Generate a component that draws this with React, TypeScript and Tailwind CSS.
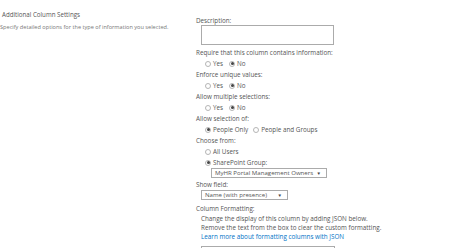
import React from 'react';

function Radio({ checked, label }: { checked?: boolean; label: string }) {
  return (
    <span className="flex items-center gap-[2px]">
      <span className="flex h-[6px] w-[6px] items-center justify-center rounded-full border border-[#b5b5b5] bg-white">
        {checked && <span className="h-[3px] w-[3px] rounded-full bg-[#444]" />}
      </span>
      <span>{label}</span>
    </span>
  );
}

function Select({ value, className }: { value: string; className: string }) {
  return (
    <div className={`flex h-[10px] items-center justify-between whitespace-nowrap border border-[#ababab] bg-white pl-[3px] pr-[5px] ${className}`}>
      <span className="text-[6.1px] leading-none">{value}</span>
      <span className="text-[4.5px] leading-none text-[#444]">▼</span>
    </div>
  );
}

export default function App() {
  return (
    <div
      className="flex h-[248px] w-[474px] overflow-hidden bg-white text-[6.3px] leading-[11px] text-[#555]"
      style={{ fontFamily: '"Open Sans", "Liberation Sans", sans-serif' }}
    >
      <div className="w-[196px] shrink-0 pt-[9px]">
        <div className="pl-[2px] text-[6.2px] text-[#555]">Additional Column Settings</div>
        <div className="mt-[2px] whitespace-nowrap text-[5.6px] text-[#777]">
          Specify detailed options for the type of information you selected.
        </div>
      </div>

      <div className="flex-1 pt-[16px]">
        <div className="leading-[9px]">Description:</div>
        <div className="ml-[5px] h-[20px] w-[133px] border border-[#ababab]" />
        <div className="mt-[2px]">Require that this column contains information:</div>
        <div className="ml-[9px] flex gap-[6px]">
          <Radio label="Yes" />
          <Radio checked label="No" />
        </div>
        <div>Enforce unique values:</div>
        <div className="ml-[9px] flex gap-[6px]">
          <Radio label="Yes" />
          <Radio checked label="No" />
        </div>
        <div>Allow multiple selections:</div>
        <div className="ml-[9px] flex gap-[6px]">
          <Radio label="Yes" />
          <Radio checked label="No" />
        </div>
        <div>Allow selection of:</div>
        <div className="ml-[9px] flex gap-[5px]">
          <Radio checked label="People Only" />
          <Radio label="People and Groups" />
        </div>
        <div>Choose from:</div>
        <div className="ml-[9px]">
          <Radio label="All Users" />
          <Radio checked label="SharePoint Group:" />
        </div>
        <Select value="MyHR Portal Management Owners" className="ml-[15px] w-[116px]" />
        <div className="mt-[1px]">Show field:</div>
        <Select value="Name (with presence)" className="ml-[5px] w-[87px]" />
        <div className="mt-[3px]">Column Formatting:</div>
        <div className="ml-[5px] whitespace-nowrap leading-[9px]">
          <div>Change the display of this column by adding JSON below.</div>
          <div>Remove the text from the box to clear the custom formatting.</div>
          <div className="text-[#0072c6]">Learn more about formatting columns with JSON</div>
        </div>
        <div className="ml-[5px] mt-[5px] h-[20px] w-[134px] border border-[#ababab]" />
      </div>
    </div>
  );
}
